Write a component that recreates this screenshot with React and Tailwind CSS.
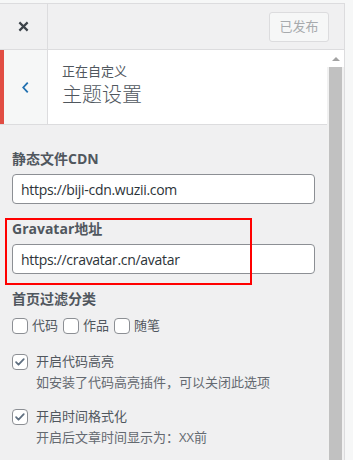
import React from "react";

function Check({ checked }) {
  return (
    <span className="flex h-4 w-4 shrink-0 items-center justify-center rounded-[4px] border border-[#8c8f94] bg-white">
      {checked && (
        <svg viewBox="0 0 16 16" className="h-[14px] w-[14px]">
          <path
            d="M3.5 8.2l2.8 2.9 6-6.4"
            fill="none"
            stroke="#5f6f80"
            strokeWidth="2"
            strokeLinecap="round"
            strokeLinejoin="round"
          />
        </svg>
      )}
    </span>
  );
}

function Field({ label, value, className = "" }) {
  return (
    <div className={className}>
      <div className="text-[14px] font-bold leading-[20px] text-[#50575e]">{label}</div>
      <div className="mt-[5px] flex h-[30px] items-center rounded-[4px] border border-[#8c8f94] bg-white px-2 text-[14px] tracking-[-0.3px] text-[#2c3338]">
        {value}
      </div>
    </div>
  );
}

export default function App() {
  return (
    <div
      className="h-[460px] overflow-hidden bg-[#f6f7f7] pt-[3px]"
      style={{ fontFamily: '"Open Sans", "Noto Sans CJK SC", sans-serif' }}
    >
      <div className="flex h-[457px] w-[345px] flex-col border-r border-t border-[#dcdcde] bg-[#f0f0f1]">
        {/* top bar */}
        <div className="flex h-[46px] shrink-0 items-center border-b border-[#dcdcde] bg-[#f0f0f1]">
          <div className="flex h-full w-[48px] items-center justify-center border-r border-[#dcdcde]">
            <svg viewBox="0 0 12 12" className="h-[11px] w-[11px]">
              <path d="M1.5 1.5l9 9M10.5 1.5l-9 9" stroke="#3c434a" strokeWidth="2.4" />
            </svg>
          </div>
          <div className="flex flex-1 justify-end pr-[15px]">
            <div className="flex h-[30px] w-[60px] items-center justify-center rounded-[3px] border border-[#dcdcde] bg-[#f6f7f7] text-[13px] text-[#a7aaad]">
              已发布
            </div>
          </div>
        </div>

        <div className="flex min-h-0 flex-1">
          <div className="min-w-0 flex-1">
            {/* section header */}
            <div className="flex h-[75px] border-b border-[#dcdcde] bg-white">
              <div className="w-[4px] bg-[#e14d43]" />
              <div className="flex w-[44px] items-center justify-center border-r border-[#dcdcde] bg-[#f6f7f7]">
                <svg viewBox="0 0 10 14" className="h-[13px] w-[9px]">
                  <path d="M7.5 1.5L2.5 7l5 5.5" fill="none" stroke="#2271b1" strokeWidth="2" />
                </svg>
              </div>
              <div className="flex flex-col pl-[14px] pt-[12px]">
                <span className="text-[13px] leading-[18px] text-[#50575e]">正在自定义</span>
                <span className="mt-[1px] text-[20px] font-light leading-[28px] text-[#50575e]">主题设置</span>
              </div>
            </div>

            {/* content */}
            <div className="relative px-3 pt-[24px]">
              <Field label="静态文件CDN" value="https://biji-cdn.wuzii.com" />
              <Field label="Gravatar地址" value="https://cravatar.cn/avatar" className="mt-[15px]" />

              <div className="mt-[15px] text-[14px] font-bold leading-[20px] text-[#50575e]">首页过滤分类</div>
              <div className="mt-[7px] flex h-[20px] items-center text-[13px] text-[#50575e]">
                <Check />
                <span className="ml-[4px] mr-[5px]">代码</span>
                <Check />
                <span className="ml-[4px] mr-[5px]">作品</span>
                <Check />
                <span className="ml-[4px]">随笔</span>
              </div>

              <div className="mt-[16px]">
                <div className="flex h-[20px] items-center text-[13px] text-[#50575e]">
                  <Check checked />
                  <span className="ml-[8px]">开启代码高亮</span>
                </div>
                <div className="pl-[24px] text-[13px] leading-[20px] text-[#646970]">
                  如安装了代码高亮插件，可以关闭此选项
                </div>
              </div>

              <div className="mt-[15px]">
                <div className="flex h-[20px] items-center text-[13px] text-[#50575e]">
                  <Check checked />
                  <span className="ml-[8px]">开启时间格式化</span>
                </div>
                <div className="pl-[24px] text-[13px] leading-[20px] text-[#646970]">
                  开启后文章时间显示为：XX前
                </div>
              </div>

              {/* annotation box */}
              <div className="pointer-events-none absolute left-[5px] top-[93px] h-[67px] w-[247px] border-2 border-[#ff0000]" />
            </div>
          </div>

          {/* scrollbar */}
          <div className="flex w-[17px] shrink-0 flex-col bg-white">
            <div className="flex h-[17px] items-center justify-center">
              <span className="h-0 w-0 border-x-[4px] border-b-[4px] border-x-transparent border-b-[#a3a3a3]" />
            </div>
            <div className="flex-1 bg-[#f1f1f1] px-[2px]">
              <div className="h-full bg-[#c1c1c1]" />
            </div>
          </div>
        </div>
      </div>
    </div>
  );
}
